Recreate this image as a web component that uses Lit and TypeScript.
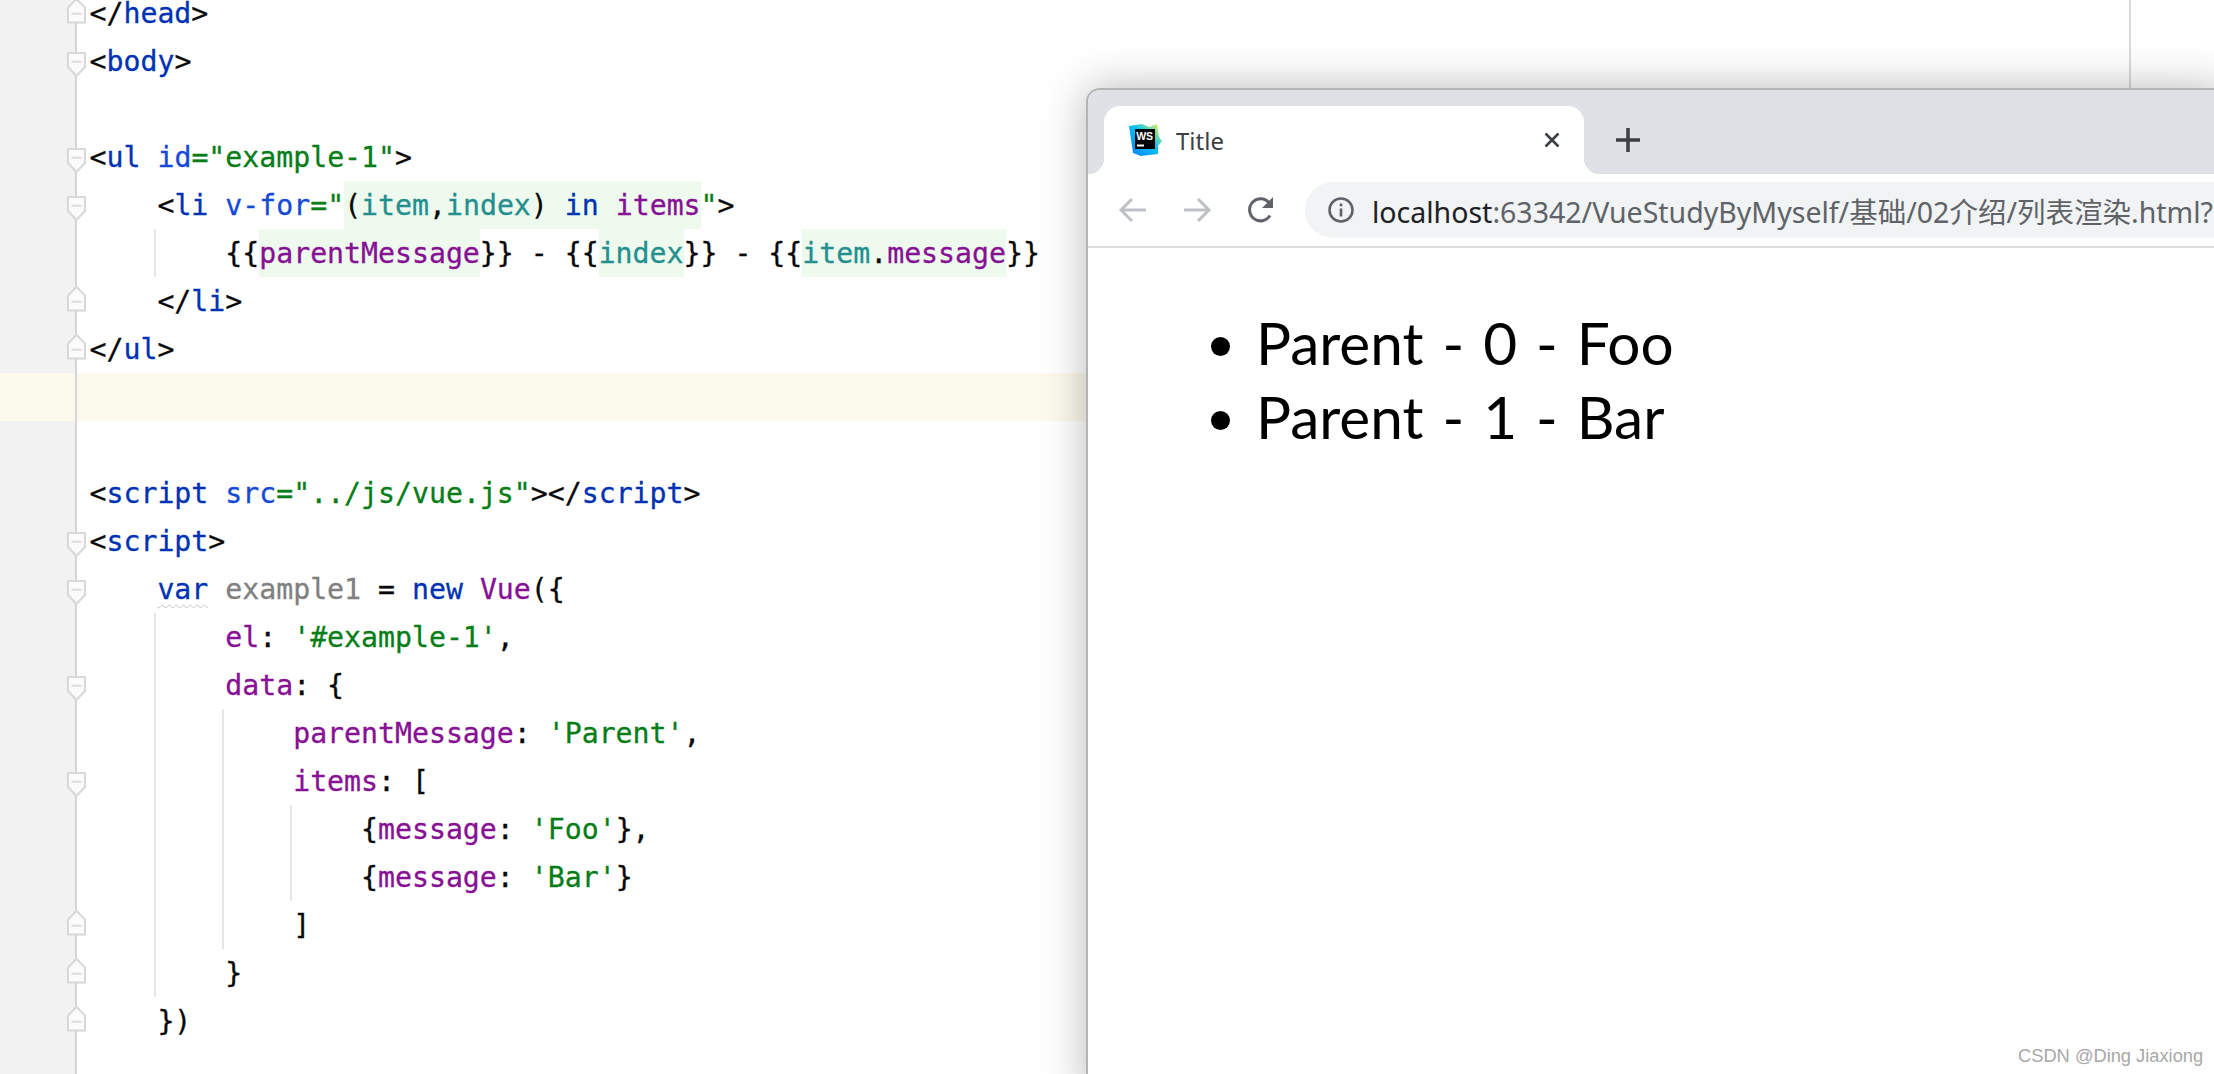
import { LitElement, html, css, svg } from "lit";
import { customElement } from "lit/decorators.js";

type Tok = [string, string];
interface Line {
  indent: number;
  toks: Tok[];
  fold?: "down" | "up";
  guides?: number[];
  caret?: boolean;
}
const p = "p", g = "g", t = "t", a = "a", s = "s", v = "v", k = "k";
const LINES: Line[] = [
  { indent: 0, fold: "up", toks: [[p, "</"], [t, "head"], [p, ">"]] },
  { indent: 0, fold: "down", toks: [[p, "<"], [t, "body"], [p, ">"]] },
  { indent: 0, toks: [] },
  { indent: 0, fold: "down", toks: [[p, "<"], [t, "ul"], [p, " "], [a, "id"], [s, '="example-1"'], [p, ">"]] },
  { indent: 4, fold: "down", toks: [[p, "<"], [t, "li"], [p, " "], [a, "v-for"], [s, '="'], ["h", ""], [s, '"'], [p, ">"]] },
  { indent: 8, guides: [154], toks: [[p, "{{"], ["h1", "parentMessage"], [p, "}} - {{"], ["h2", "index"], [p, "}} - {{"], ["h3", ""], [p, "}}"]] },
  { indent: 4, fold: "up", toks: [[p, "</"], [t, "li"], [p, ">"]] },
  { indent: 0, fold: "up", toks: [[p, "</"], [t, "ul"], [p, ">"]] },
  { indent: 0, caret: true, toks: [] },
  { indent: 0, toks: [] },
  { indent: 0, toks: [[p, "<"], [t, "script"], [p, " "], [a, "src"], [s, '="../js/vue.js"'], [p, "></"], [t, "script"], [p, ">"]] },
  { indent: 0, fold: "down", toks: [[p, "<"], [t, "script"], [p, ">"]] },
  { indent: 4, fold: "down", toks: [["w", "var"], [p, " "], [g, "example1"], [p, " = "], [k, "new"], [p, " "], [v, "Vue"], [p, "({"]] },
  { indent: 8, guides: [154], toks: [[v, "el"], [p, ": "], [s, "'#example-1'"], [p, ","]] },
  { indent: 8, fold: "down", guides: [154], toks: [[v, "data"], [p, ": {"]] },
  { indent: 12, guides: [154, 222], toks: [[v, "parentMessage"], [p, ": "], [s, "'Parent'"], [p, ","]] },
  { indent: 12, fold: "down", guides: [154, 222], toks: [[v, "items"], [p, ": ["]] },
  { indent: 16, guides: [154, 222, 290], toks: [[p, "{"], [v, "message"], [p, ": "], [s, "'Foo'"], [p, "},"]] },
  { indent: 16, guides: [154, 222, 290], toks: [[p, "{"], [v, "message"], [p, ": "], [s, "'Bar'"], [p, "}"]] },
  { indent: 12, fold: "up", guides: [154, 222], toks: [[p, "]"]] },
  { indent: 8, fold: "up", guides: [154], toks: [[p, "}"]] },
  { indent: 4, fold: "up", toks: [[p, "})"]] },
  { indent: 0, toks: [] },
];

const foldDown = svg`<svg class="fold down" width="21" height="30" viewBox="0 0 21 30"><path d="M2 3H19V17L10.5 26L2 17Z" fill="#fbfbfb" stroke="#d8d8d8" stroke-width="2"/><path d="M5.5 11.7H15.5" stroke="#dcdcdc" stroke-width="2"/></svg>`;
const foldUp = svg`<svg class="fold up" width="21" height="30" viewBox="0 0 21 30"><path d="M2 26.5H19V11.5L10.5 3L2 11.5Z" fill="#fbfbfb" stroke="#d8d8d8" stroke-width="2"/><path d="M5.5 17.7H15.5" stroke="#dcdcdc" stroke-width="2"/></svg>`;

@customElement("app-root")
export class AppRoot extends LitElement {
  static styles = css`
    :host {
      display: block;
      position: relative;
      width: 2214px;
      height: 1074px;
      overflow: hidden;
      background: #fff;
    }
    .editor {
      display: flex;
      flex-direction: column;
      margin-top: -11px;
      font-family: "DejaVu Sans Mono", monospace;
      font-size: 28.2px;
      color: #080808;
      -webkit-text-stroke: 0.3px currentColor;
    }
    .line {
      position: relative;
      display: flex;
      height: 48px;
      line-height: 50px;
      white-space: pre;
    }
    .line.caret { background: #fcfaed; }
    .gutter {
      position: relative;
      flex: none;
      width: 75px;
      background: #f2f2f2;
      border-right: 2px solid #d5d5d5;
      margin-right: 12.5px;
    }
    .caret .gutter { background: #fcfaed; }
    .fold {
      position: absolute;
      left: 66px;
    }
    .fold.down { top: 13px; }
    .fold.up { top: 7px; }
    .guide {
      position: absolute;
      top: 0;
      bottom: 0;
      width: 2px;
      background: #e6e6e6;
    }
    .p { color: #080808; }
    .t { color: #0033b3; }
    .k { color: #0033b3; }
    .a { color: #174ad4; }
    .s { color: #067d17; }
    .v { color: #871094; }
    .g { color: #808080; }
    .c { color: #248f8f; }
    .w {
      color: #0033b3;
      text-decoration: underline wavy #c4c4c4 1px;
      text-underline-offset: 5px;
    }
    .hl { background: #edfaed; display: inline-block; height: 48px; }
    .margin {
      position: absolute;
      left: 2129px;
      top: 0;
      width: 2px;
      height: 90px;
      background: #d9d9d9;
    }
    .window {
      position: absolute;
      left: 1086px;
      top: 88px;
      width: 1140px;
      height: 1010px;
      box-sizing: border-box;
      background: #fff;
      border: 2px solid #b4b4b4;
      border-top-left-radius: 14px;
      box-shadow: 0 0 44px rgba(0, 0, 0, 0.28);
      overflow: hidden;
      display: flex;
      flex-direction: column;
    }
    .tabs {
      flex: none;
      height: 84px;
      box-sizing: border-box;
      padding: 16px 0 0 16px;
      background: #dee1e6;
      display: flex;
      align-items: flex-start;
    }
    .tab {
      position: relative;
      width: 480px;
      height: 68px;
      box-sizing: border-box;
      padding: 0 24px;
      background: #fff;
      border-radius: 16px 16px 0 0;
      display: flex;
      align-items: center;
      font-family: "Noto Sans", sans-serif;
      font-size: 24px;
      color: #3c4043;
    }
    .tab::before, .tab::after {
      content: "";
      position: absolute;
      bottom: 0;
      width: 16px;
      height: 16px;
    }
    .tab::before {
      left: -16px;
      background: radial-gradient(circle at 0 0, #dee1e6 16px, #fff 16.5px);
    }
    .tab::after {
      right: -16px;
      background: radial-gradient(circle at 100% 0, #dee1e6 16px, #fff 16.5px);
    }
    .logo { flex: none; margin-right: 12px; }
    .title { flex: 1; }
    .plus { flex: none; margin: 22px 0 0 32px; }
    .toolbar {
      flex: none;
      height: 74px;
      box-sizing: border-box;
      border-bottom: 2px solid #dcdcdc;
      padding: 8px 0 0 29px;
      display: flex;
      align-items: flex-start;
    }
    .nav { flex: none; width: 32px; height: 32px; margin: 12px 32px 0 0; }
    .omni {
      flex: none;
      margin-left: -4px;
      width: 1000px;
      height: 56px;
      box-sizing: border-box;
      padding-left: 23px;
      border-radius: 28px;
      background: #f1f3f4;
      display: flex;
      align-items: center;
      white-space: nowrap;
      font-family: "Noto Sans", "Noto Sans CJK SC", sans-serif;
      font-size: 28.5px;
      color: #5f6368;
    }
    .omni svg { flex: none; margin-right: 18px; }
    .host { color: #202124; }
    ul {
      margin: 0;
      padding: 57px 0 0 168px;
      font-family: "Lato", sans-serif;
      font-size: 58.5px;
      word-spacing: 4px;
      line-height: 74px;
      color: #000;
    }
    .mark {
      position: absolute;
      left: 2018px;
      top: 1046px;
      font-family: "Liberation Sans", sans-serif;
      font-size: 18.3px;
      line-height: 20px;
      color: #a8a8a8;
    }
  `;

  private renderTok(tok: Tok) {
    const [cls, text] = tok;
    if (cls === "h")
      return html`<span class="hl"><span class="p">(</span><span class="c">item</span><span class="p">,</span><span class="c">index</span><span class="p">) </span><span class="k">in</span><span class="p"> </span><span class="v">items</span></span>`;
    if (cls === "h1") return html`<span class="hl"><span class="v">${text}</span></span>`;
    if (cls === "h2") return html`<span class="hl"><span class="c">${text}</span></span>`;
    if (cls === "h3")
      return html`<span class="hl"><span class="c">item</span><span class="p">.</span><span class="v">message</span></span>`;
    return html`<span class=${cls}>${text}</span>`;
  }

  render() {
    return html`
      <div class="editor">
        ${LINES.map(
          (l) => html`<div class="line ${l.caret ? "caret" : ""}">
            <div class="gutter">${l.fold === "down" ? foldDown : l.fold === "up" ? foldUp : ""}</div>
            ${(l.guides || []).map((x) => html`<i class="guide" style="left:${x}px"></i>`)}
            <div>${" ".repeat(l.indent)}${l.toks.map((tk) => this.renderTok(tk))}</div>
          </div>`
        )}
      </div>
      <div class="margin"></div>
      <div class="window">
        <div class="tabs">
          <div class="tab">
            <svg class="logo" width="36" height="34" viewBox="0 0 36 34">
              <defs>
                <linearGradient id="wsg" x1="0" y1="1" x2="1" y2="0">
                  <stop offset="0" stop-color="#087cfa" />
                  <stop offset="0.55" stop-color="#07c3f2" />
                  <stop offset="1" stop-color="#fcf84a" />
                </linearGradient>
              </defs>
              <path d="M1 3L14 1L21 4L29 1L31 14L34 18L30 23L30 31L13 33L5 30Z" fill="url(#wsg)" />
              <rect x="7" y="6" width="20" height="20" fill="#000" />
              <text x="8.2" y="16.5" font-family="Liberation Sans" font-weight="700" font-size="10.5" fill="#fff">WS</text>
              <rect x="9" y="21.5" width="7" height="2" fill="#fff" />
            </svg>
            <span class="title">Title</span>
            <svg width="16" height="16" viewBox="0 0 16 16"><path d="M1.5 1.5L14.5 14.5M14.5 1.5L1.5 14.5" stroke="#3c4043" stroke-width="2.6" /></svg>
          </div>
          <svg class="plus" width="24" height="24" viewBox="0 0 24 24"><path d="M12 0V24M0 12H24" stroke="#3c4043" stroke-width="3.6" /></svg>
        </div>
        <div class="toolbar">
          <svg class="nav" viewBox="0 0 32 32"><path d="M29 16H5M15 5L4 16L15 27" fill="none" stroke="#bdc1c6" stroke-width="3" /></svg>
          <svg class="nav" viewBox="0 0 32 32"><path d="M3 16H27M17 5L28 16L17 27" fill="none" stroke="#bdc1c6" stroke-width="3" /></svg>
          <svg class="nav" viewBox="0 0 32 32"><path d="M25 21.5A11 11 0 1 1 24 8.8" fill="none" stroke="#5f6368" stroke-width="3" /><path d="M28 3V14H17Z" fill="#5f6368" /></svg>
          <div class="omni">
            <svg width="26" height="26" viewBox="0 0 26 26"><circle cx="13" cy="13" r="11.5" fill="none" stroke="#5f6368" stroke-width="2.6" /><path d="M13 11.5V19.5" stroke="#5f6368" stroke-width="2.6" /><path d="M13 6.5V9.3" stroke="#5f6368" stroke-width="2.6" /></svg>
            <span><span class="host">localhost</span>:63342/VueStudyByMyself/基础/02介绍/列表渲染.html?</span>
          </div>
        </div>
        <ul>
          <li>Parent - 0 - Foo</li>
          <li>Parent - 1 - Bar</li>
        </ul>
      </div>
      <div class="mark">CSDN @Ding Jiaxiong</div>
    `;
  }
}
